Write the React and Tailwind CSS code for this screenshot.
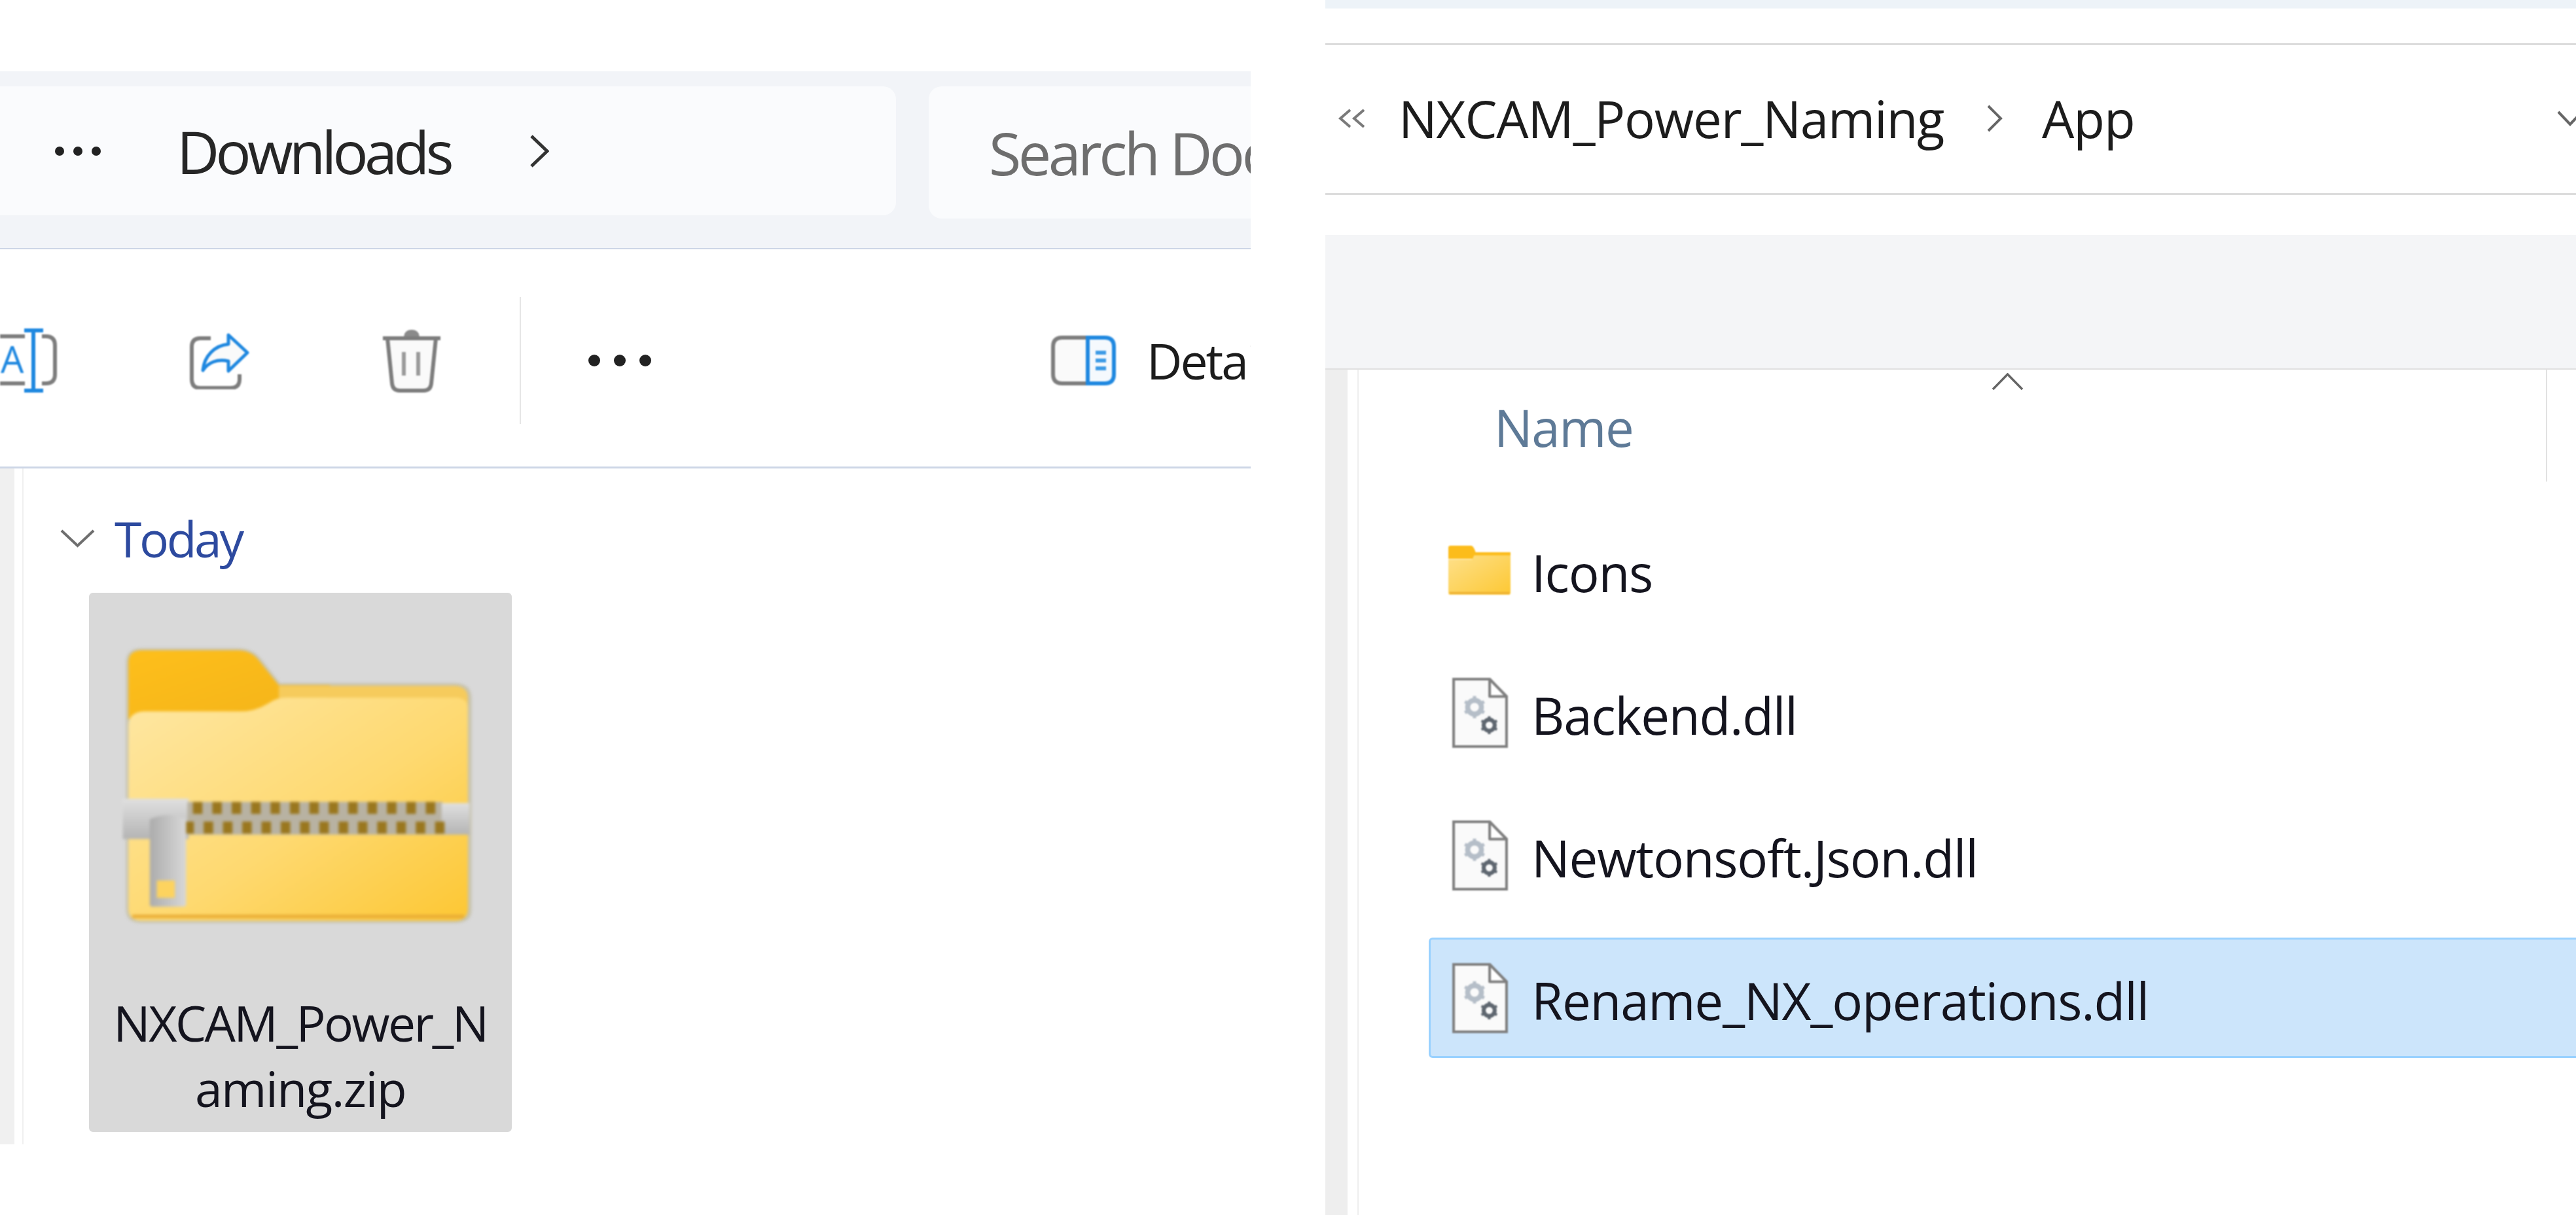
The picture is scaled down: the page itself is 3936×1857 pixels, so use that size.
const FONT = "font-['Open_Sans','Noto_Sans',sans-serif]";

function RenameIcon() {
  return (
    <svg width="87" height="98" viewBox="0 0 87 98" fill="none" className="shrink-0 blur-[0.8px]">
      <path d="M0 12H38M64 12H70Q84 12 84 26V70Q84 84 70 84H64M38 84H0" stroke="#7d7d7d" strokeWidth="6" />
      <text x="1" y="68" fontSize="56" fontFamily="Open Sans" fill="#1f88e0">A</text>
      <path d="M51 3V95M37 3H66M37 95H66" stroke="#1f88e0" strokeWidth="6" />
    </svg>
  );
}

function ShareIcon() {
  return (
    <svg width="91" height="87" viewBox="0 0 91 87" fill="none" className="shrink-0 blur-[0.8px]">
      <path d="M32 9H16Q3 9 3 22V72Q3 85 16 85H62Q76 85 76 72V64" stroke="#7d7d7d" strokeWidth="6" />
      <path d="M59 4L88 31L59 59V44C42 40 28 46 20 58C22 36 38 20 59 18Z" fill="#fafafa" stroke="#1f88e0" strokeWidth="5" strokeLinejoin="round" />
    </svg>
  );
}

function TrashIcon() {
  return (
    <svg width="88" height="98" viewBox="0 0 88 98" fill="none" className="shrink-0 blur-[0.8px]">
      <path d="M32 13Q33 2 44 2Q55 2 56 13Z" fill="#8a8a8a" />
      <path d="M7 15L14 84Q15 95 26 95H62Q73 95 74 84L81 15Z" fill="#fafafa" stroke="#7d7d7d" strokeWidth="6" />
      <path d="M0 15H88" stroke="#7d7d7d" strokeWidth="6" />
      <path d="M32 36V72M54 36V72" stroke="#9a9a9a" strokeWidth="6" />
    </svg>
  );
}

function PanelIcon() {
  return (
    <svg width="99" height="76" viewBox="0 0 99 76" fill="none" className="shrink-0 blur-[0.8px]">
      <path d="M56 3H17Q3 3 3 17V59Q3 73 17 73H56Z" fill="#fafafa" stroke="#7d7d7d" strokeWidth="6" />
      <path d="M56 3H82Q96 3 96 17V59Q96 73 82 73H56Z" fill="#f5f9fd" stroke="#1f88e0" strokeWidth="6" />
      <path d="M68 26H84M68 38H84M68 50H84" stroke="#3d9be6" strokeWidth="6" />
    </svg>
  );
}

function Dots({ size, gap }) {
  return (
    <div className={`flex shrink-0 ${gap}`}>
      {[0, 1, 2].map((i) => (
        <span key={i} className={`rounded-full bg-[#222222] ${size}`} />
      ))}
    </div>
  );
}

function ZipIcon() {
  const topTeeth = Array.from({ length: 13 }, (_, i) => 352 + i * 77.5);
  const bottomTeeth = Array.from({ length: 14 }, (_, i) => 318 + i * 77);
  return (
    <svg width="600" height="480" viewBox="0 0 1568 1440" preserveAspectRatio="none" className="blur-[2px]">
      <defs>
        <linearGradient id="zipBody" x1="0" y1="0" x2="1" y2="1">
          <stop offset="0" stopColor="#fee7a3" />
          <stop offset="0.55" stopColor="#fed970" />
          <stop offset="1" stopColor="#fdc733" />
        </linearGradient>
        <linearGradient id="zipTab" x1="0" y1="0" x2="1" y2="1">
          <stop offset="0" stopColor="#febf1b" />
          <stop offset="1" stopColor="#f3b31a" />
        </linearGradient>
        <linearGradient id="zipMetal" x1="0" y1="0" x2="0" y2="1">
          <stop offset="0" stopColor="#e0e0e0" />
          <stop offset="1" stopColor="#b4b4b4" />
        </linearGradient>
        <linearGradient id="zipPull" x1="0" y1="0" x2="1" y2="0">
          <stop offset="0" stopColor="#acacac" />
          <stop offset="1" stopColor="#d8d8d8" />
        </linearGradient>
      </defs>
      <path d="M85 1295V160Q85 95 150 95H530Q590 95 622 142L700 255H1395Q1465 255 1465 325V1295Q1465 1355 1395 1355H150Q85 1355 85 1295Z" fill="#c8c4b0" />
      <path d="M95 430V160Q95 105 150 105H530Q585 105 615 150L695 265H900V420H95Z" fill="url(#zipTab)" />
      <path d="M695 268H1395Q1450 268 1450 325V400H695Z" fill="#f6cb5c" />
      <path d="M95 450Q95 385 165 385H540Q600 385 650 350Q685 322 725 322H1400Q1450 322 1450 372V1290Q1450 1345 1395 1345H150Q95 1345 95 1290Z" fill="url(#zipBody)" />
      <path d="M110 1325H1435" stroke="#e9ad36" strokeWidth="16" />
      <rect x="72" y="785" width="263" height="185" fill="url(#zipMetal)" />
      <rect x="330" y="800" width="1020" height="150" fill="#b8b2a2" />
      <rect x="1345" y="805" width="112" height="145" fill="url(#zipMetal)" />
      {topTeeth.map((x) => (
        <rect key={x} x={x} y="800" width="38" height="55" fill="#9a771e" />
      ))}
      {bottomTeeth.map((x) => (
        <rect key={x} x={x} y="890" width="38" height="55" fill="#9a771e" />
      ))}
      <path d="M180 880Q255 840 325 880V1270Q325 1280 315 1280H190Q180 1280 180 1270Z" fill="url(#zipPull)" />
      <rect x="208" y="1160" width="72" height="80" fill="#fdd35f" />
    </svg>
  );
}

function FolderIcon() {
  return (
    <svg width="95" height="75" viewBox="0 0 285 225" className="shrink-0 blur-[1px]">
      <defs>
        <linearGradient id="folderBody" x1="0" y1="0" x2="1" y2="1">
          <stop offset="0" stopColor="#fee08a" />
          <stop offset="1" stopColor="#fdc833" />
        </linearGradient>
      </defs>
      <path d="M0 10Q0 0 10 0H105Q115 0 125 30H285V60H0Z" fill="#fcbc1b" />
      <path d="M0 62H105Q112 62 118 44H285V215Q285 225 275 225H10Q0 225 0 215Z" fill="url(#folderBody)" />
      <path d="M5 217H280" stroke="#eeb233" strokeWidth="10" />
    </svg>
  );
}

function Gear({ cx, cy, r, color }) {
  return (
    <g stroke={color} fill="none">
      <circle cx={cx} cy={cy} r={r * 0.62} strokeWidth={r * 0.45} />
      {[0, 60, 120].map((a) => (
        <line
          key={a}
          x1={cx}
          y1={cy - r}
          x2={cx}
          y2={cy + r}
          strokeWidth={r * 0.3}
          strokeDasharray={`${r * 0.35} ${r * 1.3}`}
          transform={`rotate(${a} ${cx} ${cy})`}
        />
      ))}
    </g>
  );
}

function DllIcon() {
  return (
    <svg width="85" height="107" viewBox="0 0 250 315" className="shrink-0 blur-[1px]">
      <path d="M6 6H168L244 84V309H6Z" fill="#fafafa" stroke="#7f7f7f" strokeWidth="12" />
      <path d="M168 6V84H244Z" fill="#ffffff" stroke="#7f7f7f" strokeWidth="12" strokeLinejoin="round" />
      <Gear cx={100} cy={132} r={50} color="#b5bec8" />
      <Gear cx={166} cy={213} r={40} color="#5f6770" />
    </svg>
  );
}

const files = [
  { name: 'Icons', folder: true },
  { name: 'Backend.dll' },
  { name: 'Newtonsoft.Json.dll' },
  { name: 'Rename_NX_operations.dll', selected: true },
];

function LeftWindow() {
  return (
    <div className="w-[1911px] shrink-0 overflow-hidden">
      <div className="h-[109px]" />
      <div className="flex h-[272px] border-b-2 border-[#cdd6e6] bg-[#f2f4f8] pt-[23px]">
        <div className="flex h-[197px] w-[1369px] shrink-0 items-center rounded-r-[20px] bg-[#fafbfd]">
          <div className="ml-[84px]">
            <Dots size="h-[14px] w-[14px]" gap="gap-[14px]" />
          </div>
          <span className="ml-[116px] w-[421px] text-[90px] leading-none tracking-[-5.7px] whitespace-nowrap text-[#262626]">Downloads</span>
          <svg width="30" height="50" viewBox="0 0 30 50" fill="none" className="ml-[118px]">
            <path d="M3 2L27 25L3 48" stroke="#333333" strokeWidth="5" />
          </svg>
        </div>
        <div className="ml-[50px] flex h-[202px] flex-1 items-center overflow-hidden rounded-l-[20px] bg-[#fafbfd] pl-[92px]">
          <span className="text-[90px] leading-none tracking-[-4.6px] whitespace-nowrap text-[#6e6e6e]">Search Documents</span>
        </div>
      </div>
      <div className="flex h-[335px] items-center overflow-hidden border-b-3 border-[#cdd6e6] pt-[8px]">
        <RenameIcon />
        <div className="ml-[203px]"><ShareIcon /></div>
        <div className="ml-[204px]"><TrashIcon /></div>
        <div className="ml-[121px] h-[194px] w-[2px] shrink-0 bg-[#e6e6e6]" />
        <div className="ml-[103px]">
          <Dots size="h-[18px] w-[18px]" gap="gap-[21px]" />
        </div>
        <div className="ml-[611px]"><PanelIcon /></div>
        <span className="ml-[47px] text-[75px] leading-none tracking-[-3px] whitespace-nowrap text-[#1c1c1c]">Details</span>
      </div>
      <div className="flex h-[1033px]">
        <div className="w-[22px] shrink-0 bg-[#f0f0f0]" />
        <div className="ml-[12px] flex-1 border-l-2 border-[#f0f0f0] pt-[67px]">
          <div className="flex h-[80px] items-center">
            <svg width="53" height="28" viewBox="0 0 53 28" fill="none" className="ml-[56px]">
              <path d="M2 2L26.5 25L51 2" stroke="#6e6e6e" strokeWidth="4" />
            </svg>
            <span className="ml-[30px] text-[75px] leading-none tracking-[-3.4px] text-[#2d4a9f]">Today</span>
          </div>
          <div className="mt-[43px] ml-[100px] h-[824px] w-[646px] rounded-md bg-[#d9d9d9] pt-[53px] pl-[24px]">
            <ZipIcon />
            <div className="mt-[74px] -ml-[24px] text-center text-[75px] leading-[100px] tracking-[-2.6px] text-[#14141e]">
              <div>NXCAM_Power_N</div>
              <div className="tracking-[-1.6px]">aming.zip</div>
            </div>
          </div>
        </div>
      </div>
    </div>
  );
}

function RightWindow() {
  return (
    <div className="ml-[114px] flex h-[1857px] flex-1 flex-col overflow-hidden">
      <div className="h-[13px] bg-[#edf3f8]" />
      <div className="h-[56px] border-b-3 border-[#dcdcdc]" />
      <div className="flex h-[229px] items-center border-b-3 border-[#dcdcdc] pb-[2px] text-[78px] leading-none whitespace-nowrap text-[#1c1c1c]">
        <svg width="46" height="30" viewBox="0 0 46 30" fill="none" className="ml-[18px] shrink-0">
          <path d="M20 2L5 15L20 28M41 2L26 15L41 28" stroke="#7a7a7a" strokeWidth="4" />
        </svg>
        <span className="ml-[48px] w-[835px] shrink-0 tracking-[-1.2px]">NXCAM_Power_Naming</span>
        <svg width="25" height="42" viewBox="0 0 25 42" fill="none" className="ml-[63px] shrink-0">
          <path d="M3 2L22 21L3 40" stroke="#666666" strokeWidth="4" />
        </svg>
        <span className="ml-[60px] w-[145px] shrink-0 tracking-[-1px]">App</span>
        <svg width="40" height="24" viewBox="0 0 40 24" fill="none" className="ml-[642px] shrink-0">
          <path d="M2 2L20 21L38 2" stroke="#666666" strokeWidth="4" />
        </svg>
      </div>
      <div className="mt-[61px] h-[206px] shrink-0 border-b-2 border-[#e0e0e0] bg-[#f4f5f7]" />
      <div className="flex flex-1">
        <div className="w-[34px] shrink-0 bg-[#eeeeee]" />
        <div className="ml-[15px] flex-1 border-l-2 border-[#eeeeee]">
          <div className="relative flex h-[171px] w-[1816px] items-center border-r-2 border-[#e2e2e2] pl-[207px]">
            <span className="pt-[4px] text-[78px] leading-none tracking-[-1.4px] text-[#5e7a97]">Name</span>
            <svg width="49" height="27" viewBox="0 0 49 27" fill="none" className="absolute top-[5px] left-[967px]">
              <path d="M2 25L24.5 2L47 25" stroke="#666666" strokeWidth="3.5" />
            </svg>
          </div>
          <div className="mt-[43px] ml-[107px] flex flex-col gap-[34px]">
            {files.map((f) => (
              <div
                key={f.name}
                className={`flex h-[184px] items-center border-3 ${f.selected ? 'rounded-l-md border-r-0 border-[#99d1ff] bg-[#cce5fb]' : 'border-transparent'}`}
              >
                <div className={`flex w-[154px] shrink-0 ${f.folder ? 'pl-[27px]' : 'pl-[33px]'}`}>
                  {f.folder ? <FolderIcon /> : <DllIcon />}
                </div>
                <span className="pt-[8px] text-[78px] leading-none tracking-[-1.2px] whitespace-nowrap text-[#14141e]">{f.name}</span>
              </div>
            ))}
          </div>
        </div>
      </div>
    </div>
  );
}

export default function App() {
  return (
    <div className={`flex h-[1857px] w-[3936px] overflow-hidden bg-white ${FONT}`}>
      <LeftWindow />
      <RightWindow />
    </div>
  );
}
